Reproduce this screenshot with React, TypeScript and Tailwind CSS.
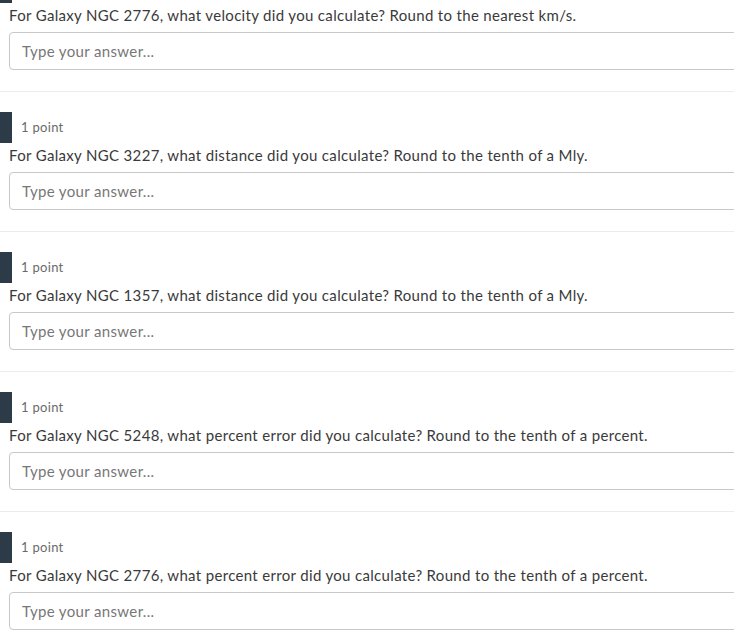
import React from 'react';

type Question = { id: number; text: string };

const questions: Question[] = [
  { id: 1, text: 'For Galaxy NGC 2776, what velocity did you calculate? Round to the nearest km/s.' },
  { id: 2, text: 'For Galaxy NGC 3227, what distance did you calculate? Round to the tenth of a Mly.' },
  { id: 3, text: 'For Galaxy NGC 1357, what distance did you calculate? Round to the tenth of a Mly.' },
  { id: 4, text: 'For Galaxy NGC 5248, what percent error did you calculate? Round to the tenth of a percent.' },
  { id: 5, text: 'For Galaxy NGC 2776, what percent error did you calculate? Round to the tenth of a percent.' },
];

const QuestionBlock: React.FC<{ q: Question; first: boolean; last: boolean }> = ({ q, first, last }) => (
  <div className={`${first ? '' : 'pt-5'} pb-[21px] ${last ? '' : 'border-b border-[#ececec]'}`}>
    {first ? (
      // header of the first card is scrolled out of view, only the bar's tail shows
      <div className="w-3 h-[3px] bg-[#2c3b47]" />
    ) : (
      <div className="flex items-center h-[31px]">
        <div className="w-3 h-[31px] bg-[#2c3b47]" />
        <span className="ml-[9px] text-[13px] tracking-[0.3px] text-[#6a6a6a]">1 point</span>
      </div>
    )}
    <p className="mt-[2px] ml-[9px] text-[15px] leading-5 tracking-[0.33px] text-[#3a3a3a]">{q.text}</p>
    <input
      type="text"
      placeholder="Type your answer..."
      className="mt-[7px] ml-[9px] block w-[760px] h-[38px] px-3 rounded border border-[#c8c8c8] bg-white text-[15px] tracking-[0.35px] text-[#333] placeholder:text-[#777] outline-none"
    />
  </div>
);

const App: React.FC = () => {
  return (
    <div className="min-h-screen bg-white overflow-hidden" style={{ fontFamily: 'Lato, "Open Sans", sans-serif' }}>
      {questions.map((q, i) => (
        <QuestionBlock key={q.id} q={q} first={i === 0} last={i === questions.length - 1} />
      ))}
    </div>
  );
};

export default App;
